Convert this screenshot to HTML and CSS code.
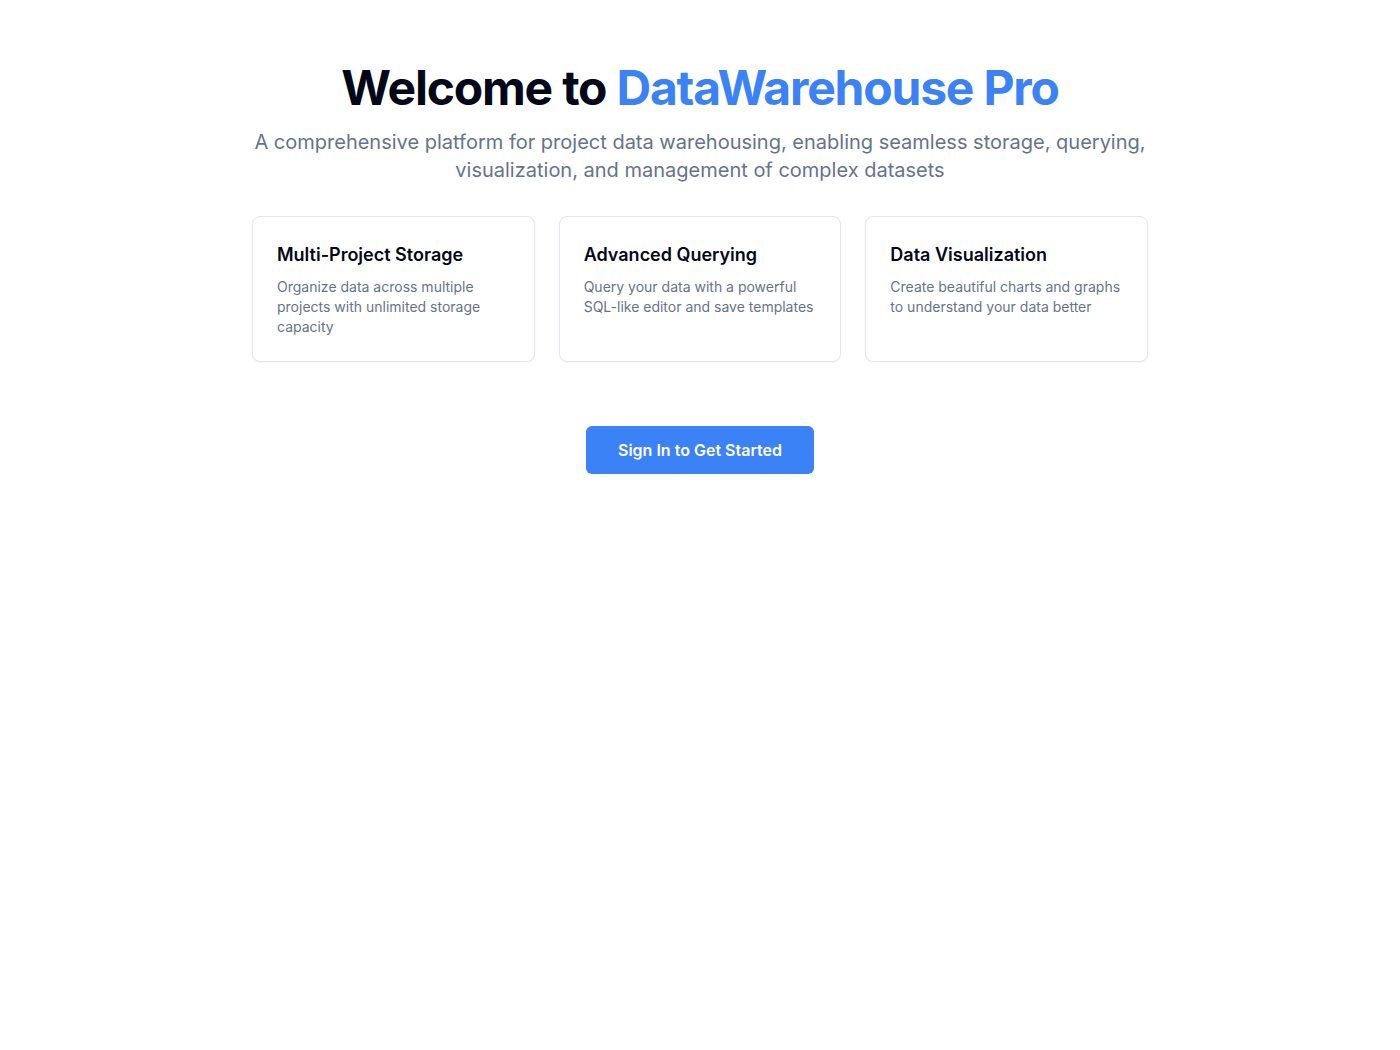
FILE: index.html
```html
<!DOCTYPE html>
<html lang="en">
<head>
<meta charset="utf-8">
<title>DataWarehouse Pro</title>
<link rel="stylesheet" href="styles.css">
</head>
<body>
<main class="hero">
  <h1 class="title">Welcome to <span class="brand">DataWarehouse Pro</span></h1>
  <p class="subtitle">A comprehensive platform for project data warehousing, enabling seamless storage, querying, visualization, and management of complex datasets</p>
  <div class="features">
    <div class="card">
      <h3 class="card-title">Multi-Project Storage</h3>
      <p class="card-text">Organize data across multiple projects with unlimited storage capacity</p>
    </div>
    <div class="card">
      <h3 class="card-title">Advanced Querying</h3>
      <p class="card-text">Query your data with a powerful SQL-like editor and save templates</p>
    </div>
    <div class="card">
      <h3 class="card-title">Data Visualization</h3>
      <p class="card-text">Create beautiful charts and graphs to understand your data better</p>
    </div>
  </div>
  <div class="actions">
    <button class="btn-primary">Sign In to Get Started</button>
  </div>
</main>
</body>
</html>
```
FILE: styles.css
```css
* { box-sizing: border-box; }
html, body { margin: 0; padding: 0; background: #ffffff; }
body {
  font-family: Inter, "Noto Sans", sans-serif;
  color: #020817;
}
.hero {
  max-width: 896px;
  margin: 0 auto;
  padding: 64px 0;
  text-align: center;
}
.title {
  margin: 0;
  font-size: 48px;
  line-height: 48px;
  font-weight: 700;
  letter-spacing: -0.025em;
  color: #020817;
}
.brand { color: #3b82f6; }
.subtitle {
  margin: 16px 0 0;
  font-size: 20px;
  line-height: 28px;
  color: #64748b;
}
.features {
  margin-top: 32px;
  display: grid;
  grid-template-columns: repeat(3, 1fr);
  gap: 24px;
  text-align: left;
}
.card {
  border: 1px solid #e2e8f0;
  border-radius: 8px;
  padding: 24px;
  background: #fff;
  box-shadow: 0 1px 2px rgba(0,0,0,0.03);
}
.card-title {
  margin: 0;
  font-size: 18px;
  line-height: 28px;
  font-weight: 600;
  color: #020817;
}
.card-text {
  margin: 8px 0 0;
  font-size: 14px;
  line-height: 20px;
  color: #64748b;
}
.actions {
  margin-top: 64px;
  display: flex;
  justify-content: center;
}
.btn-primary {
  font-family: inherit;
  font-size: 16px;
  line-height: 24px;
  font-weight: 600;
  color: #fff;
  background: #3b82f6;
  border: none;
  border-radius: 6px;
  padding: 12px 32px;
  cursor: pointer;
}
```
